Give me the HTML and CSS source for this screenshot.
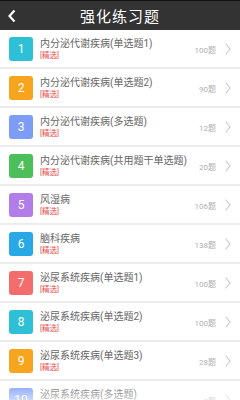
FILE: index.html
```html
<!doctype html>
<html lang="zh">
<head>
	<meta charset="UTF-8">
	<title>强化练习题</title>
	<link rel="stylesheet" href="styles.css">
</head>
<body>
	<div class="head">
		<span class="back"><svg width="10" height="14" viewBox="0 0 10 14"><path d="M7.5 1.5 L2.5 7 L7.5 12.5" fill="none" stroke="#fff" stroke-width="2.2"/></svg></span>
		<h1>强化练习题</h1>
	</div>
	<ul class="list">
		<li><span class="num c1">1</span><div class="txt"><p>内分泌代谢疾病(单选题1)</p><em>[精选]</em></div><span class="cnt">100题</span><i class="arr"></i></li>
		<li><span class="num c2">2</span><div class="txt"><p>内分泌代谢疾病(单选题2)</p><em>[精选]</em></div><span class="cnt">90题</span><i class="arr"></i></li>
		<li><span class="num c3">3</span><div class="txt"><p>内分泌代谢疾病(多选题)</p><em>[精选]</em></div><span class="cnt">12题</span><i class="arr"></i></li>
		<li><span class="num c4">4</span><div class="txt"><p>内分泌代谢疾病(共用题干单选题)</p><em>[精选]</em></div><span class="cnt">20题</span><i class="arr"></i></li>
		<li><span class="num c5">5</span><div class="txt"><p>风湿病</p><em>[精选]</em></div><span class="cnt">106题</span><i class="arr"></i></li>
		<li><span class="num c6">6</span><div class="txt"><p>脑科疾病</p><em>[精选]</em></div><span class="cnt">138题</span><i class="arr"></i></li>
		<li><span class="num c7">7</span><div class="txt"><p>泌尿系统疾病(单选题1)</p><em>[精选]</em></div><span class="cnt">100题</span><i class="arr"></i></li>
		<li><span class="num c1">8</span><div class="txt"><p>泌尿系统疾病(单选题2)</p><em>[精选]</em></div><span class="cnt">100题</span><i class="arr"></i></li>
		<li><span class="num c2">9</span><div class="txt"><p>泌尿系统疾病(单选题3)</p><em>[精选]</em></div><span class="cnt">28题</span><i class="arr"></i></li>
		<li><span class="num c3">10</span><div class="txt"><p>泌尿系统疾病(多选题)</p><em>[精选]</em></div><span class="cnt">8题</span><i class="arr"></i></li>
	</ul>
	<div class="fade"></div>
</body>
</html>
```

FILE: styles.css
```css
*{
	margin: 0;
	padding: 0;
	list-style-type: none;
}
body{
	background: #ececec;
	font-family: Roboto, "Noto Sans CJK SC", sans-serif;
	width: 240px;
	height: 400px;
	overflow: hidden;
}
.head{
	height: 30px;
	background: #333;
	border-top: 1px solid #111;
	box-sizing: border-box;
	display: flex;
	align-items: center;
	justify-content: center;
	position: relative;
}
.head h1{
	color: #fff;
	font-size: 15px;
	font-weight: normal;
	letter-spacing: 1px;
}
.back{
	position: absolute;
	left: 7px;
	top: 8px;
	line-height: 0;
}
.list li{
	height: 36px;
	margin-bottom: 2px;
	background: #fff;
	display: flex;
	align-items: center;
	padding: 1px 0 0 9px;
}
.num{
	width: 24px;
	height: 24px;
	border-radius: 3px;
	color: #fff;
	font-size: 12px;
	display: flex;
	align-items: center;
	justify-content: center;
	flex-shrink: 0;
}
.c1{ background: #2dc0d6; }
.c2{ background: #f7a51e; }
.c3{ background: #7d9cf6; }
.c4{ background: #4cbe5a; }
.c5{ background: #b37de9; }
.c6{ background: #28a9e6; }
.c7{ background: #f26d6c; }
.txt{
	flex: 1;
	margin-left: 7px;
	display: flex;
	flex-direction: column;
	gap: 1px;
}
.txt p{
	font-size: 10px;
	color: #666;
	line-height: 12px;
}
.txt em{
	font-style: normal;
	font-size: 7.5px;
	color: #e84a4a;
	line-height: 10px;
}
.cnt{
	font-size: 8px;
	color: #b0b0b0;
	margin-right: 6px;
}
.arr{
	width: 7px;
	height: 7px;
	border-top: 1px solid #c4c4c4;
	border-right: 1px solid #c4c4c4;
	transform: scaleX(0.8) rotate(45deg);
	margin-right: 10px;
}
.fade{
	position: absolute;
	left: 0;
	top: 382px;
	width: 240px;
	height: 18px;
	background: linear-gradient(rgba(255,255,255,0), rgba(255,255,255,0.6));
}
```
